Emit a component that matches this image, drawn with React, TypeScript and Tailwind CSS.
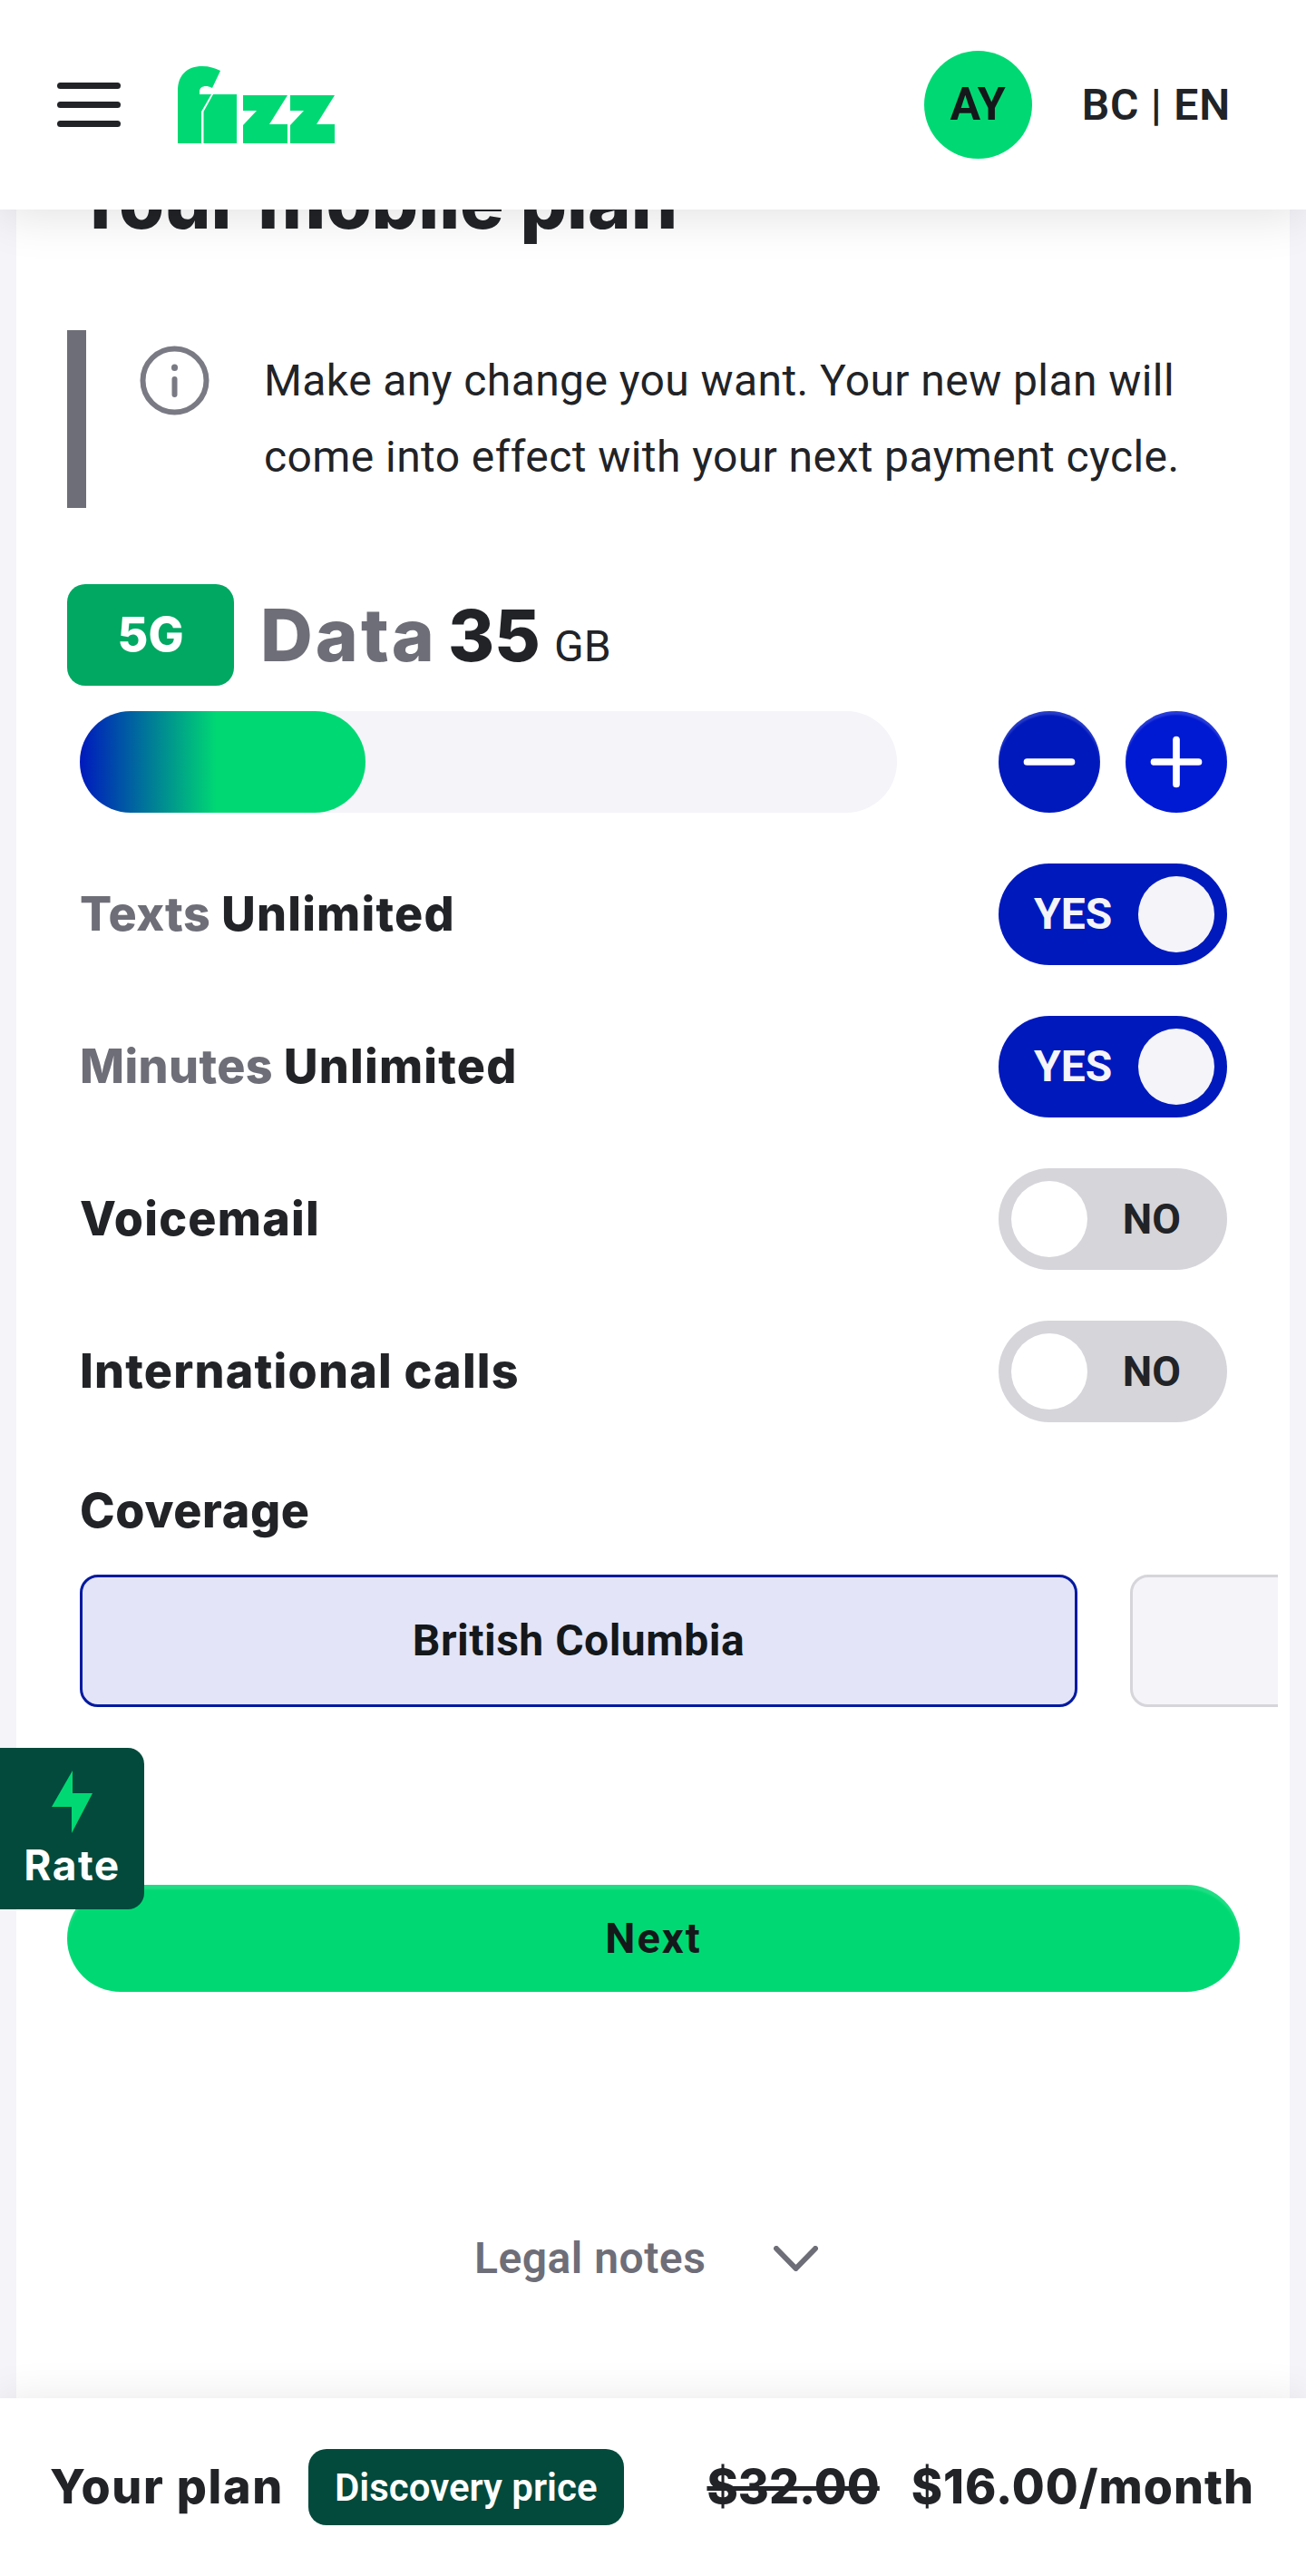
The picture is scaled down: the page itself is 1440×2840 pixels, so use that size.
import React from 'react';
import { Minus, Plus } from 'lucide-react';

const display = "font-['Inter','Liberation_Sans',sans-serif]";

function Toggle({ on }: { on: boolean }) {
    if (on) {
        return (
            <div className="w-[252px] h-[112px] rounded-full bg-[#0019bd] flex items-center justify-between pl-[39px] pr-[14px]">
                <span className="text-[48px] font-bold text-[#f4f4f9]">YES</span>
                <span className="w-[84px] h-[84px] rounded-full bg-[#f4f4f9]"></span>
            </div>
        );
    }
    return (
        <div className="w-[252px] h-[112px] rounded-full bg-[#d5d5da] flex items-center justify-between pl-[14px] pr-[51px]">
            <span className="w-[84px] h-[84px] rounded-full bg-white"></span>
            <span className="text-[46px] font-bold text-[#212327]">NO</span>
        </div>
    );
}

function Row({ gray, dark, on }: { gray?: string; dark: string; on: boolean }) {
    return (
        <div className="flex items-center justify-between h-[112px] mb-[56px]">
            <div className={`${display} text-[52px] font-extrabold tracking-[1.2px] text-[#212327]`}>
                {gray && <span className="text-[#6e6e78] tracking-[0.4px]">{gray} </span>}
                {dark}
            </div>
            <Toggle on={on} />
        </div>
    );
}

function FizzLogo() {
    return (
        <svg width="174" height="85" viewBox="0 0 174 85" fill="#00d973" className="ml-[63px]">
            <path d="M0 85V27C0 10 10 0 27 0C35 0 41 2 47 5L38 24C35 22.5 33 22 31 22C27 22 24 24 24 28V31H37L26 50V85Z" />
            <path d="M39 31H65V85H28.5V50Z" />
            <path d="M72 32H121L101 64H121V85H72V65L87 49H72Z" />
            <path d="M124 32H173L153 64H173V85H124V65L139 49H124Z" />
        </svg>
    );
}

export default function App() {
    return (
        <div className="relative w-[1440px] h-[2840px] flex flex-col bg-[#f4f4f9] overflow-hidden font-['Roboto',sans-serif] text-[#212327]">
            <header className="relative z-10 h-[231px] shrink-0 bg-white flex items-center pl-[63px] pr-[83px] shadow-[0_6px_50px_rgba(0,0,0,0.12)]">
                <div className="flex flex-col gap-[14px] w-[70px]">
                    <span className="h-[7px] rounded-full bg-[#212327]"></span>
                    <span className="h-[7px] rounded-full bg-[#212327]"></span>
                    <span className="h-[7px] rounded-full bg-[#212327]"></span>
                </div>
                <FizzLogo />
                <div className="ml-auto w-[119px] h-[119px] rounded-full bg-[#00d973] flex items-center justify-center text-[50px] font-bold text-[#14181a]">
                    AY
                </div>
                <div className="ml-[55px] text-[48px] font-semibold tracking-[0.8px]">BC | EN</div>
            </header>

            <main className="flex-1 min-h-0 mx-[18px] bg-white overflow-hidden">
                <h1 className={`${display} -mt-[50px] ml-[62px] text-[81px] leading-[84px] font-extrabold whitespace-nowrap`}>Your mobile plan</h1>

                <div className="mt-[99px] ml-[56px] h-[196px] flex border-l-[21px] border-[#6e6e78]">
                    <svg width="77" height="77" viewBox="0 0 77 77" fill="none" stroke="#7a7a84" strokeWidth="6" strokeLinecap="round" className="ml-[59px] mt-[17px] shrink-0">
                        <circle cx="38.5" cy="38.5" r="35" />
                        <path d="M38.5 37V54" />
                        <path d="M38.5 24V24.5" strokeWidth="7" />
                    </svg>
                    <p className="ml-[60px] mt-[14px] text-[48px] leading-[84px] tracking-[0.42px] whitespace-nowrap">
                        Make any change you want. Your new plan will<br />
                        come into effect with your next payment cycle.
                    </p>
                </div>

                <div className="mt-[84px] ml-[56px] h-[112px] flex items-center">
                    <div className={`${display} w-[184px] h-[112px] rounded-[20px] bg-[#00a862] flex items-center justify-center text-[52px] font-extrabold text-white`}>5G</div>
                    <div className="ml-[29px] flex items-baseline">
                        <span className={`${display} text-[80px] font-extrabold tracking-[3px] text-[#6e6e78]`}>Data</span>
                        <span className={`${display} ml-[12px] text-[78px] font-extrabold`}>35</span>
                        <span className="ml-[15px] text-[48px]">GB</span>
                    </div>
                </div>

                <div className="mt-[28px] ml-[70px] mr-[69px]">
                    <div className="flex items-center justify-between h-[112px] mb-[56px]">
                        <div className="w-[901px] h-[112px] rounded-full bg-[#f4f4f9]">
                            <div className="w-[315px] h-[112px] rounded-full bg-[linear-gradient(90deg,#0019bd_0%,#00d973_48%)]"></div>
                        </div>
                        <div className="flex gap-[28px]">
                            <button className="w-[112px] h-[112px] rounded-full bg-[#0019bd] flex items-center justify-center shadow-[inset_0_4px_2px_rgba(255,255,255,0.15)]">
                                <Minus size={84} color="white" strokeWidth={2.2} />
                            </button>
                            <button className="w-[112px] h-[112px] rounded-full bg-[#0019d2] flex items-center justify-center shadow-[inset_0_4px_2px_rgba(255,255,255,0.15)]">
                                <Plus size={84} color="white" strokeWidth={2.2} />
                            </button>
                        </div>
                    </div>
                    <Row gray="Texts" dark="Unlimited" on={true} />
                    <Row gray="Minutes" dark="Unlimited" on={true} />
                    <Row dark="Voicemail" on={false} />
                    <Row dark="International calls" on={false} />
                    <div className={`${display} pt-[10px] text-[52px] leading-[64px] font-extrabold tracking-[0.7px]`}>Coverage</div>
                </div>

                <div className="mt-[38px] ml-[70px] w-[1321px] flex gap-[58px] overflow-hidden">
                    <div className="w-[1100px] h-[146px] shrink-0 rounded-[20px] border-[3px] border-[#0019a0] bg-[#e3e4f8] flex items-center justify-center text-[48px] font-bold tracking-[0.5px] text-[#14181a]">
                        British Columbia
                    </div>
                    <div className="w-[400px] h-[146px] shrink-0 rounded-[20px] border-[3px] border-[#d5d5da] bg-[#f4f4f9]"></div>
                </div>

                <button className="mt-[196px] ml-[56px] w-[1293px] h-[118px] rounded-full bg-[#00d973] shadow-[inset_0_5px_2px_rgba(255,255,255,0.12)] text-[47px] font-bold tracking-[2px] text-[#14181a]">
                    Next
                </button>

                <div className="mt-[266px] ml-[505px] h-[56px] flex items-center text-[48px] font-semibold tracking-[0.5px] text-[#6e6e78]">
                    <span>Legal notes</span>
                    <svg width="49" height="28" viewBox="0 0 49 28" fill="none" stroke="#6e6e78" strokeWidth="6" strokeLinecap="round" strokeLinejoin="round" className="ml-[75px]">
                        <path d="M3 3L24.5 25L46 3" />
                    </svg>
                </div>
            </main>

            <footer className="relative z-10 h-[196px] shrink-0 bg-white flex items-center pl-[55px] pr-[57px] shadow-[0_-4px_40px_rgba(0,0,0,0.08)]">
                <span className={`${display} text-[52px] font-extrabold tracking-[1.7px]`}>Your plan</span>
                <span className="ml-[27px] h-[84px] px-[29px] rounded-[20px] bg-[#044a3c] flex items-center text-[42px] font-semibold text-white">Discovery price</span>
                <span className={`${display} ml-auto text-[52px] font-extrabold line-through`}>$32.00</span>
                <span className={`${display} ml-[35px] text-[52px] font-extrabold tracking-[1px]`}>$16.00/month</span>
            </footer>

            {/* Floating rate tab */}
            <div className="absolute z-20 left-0 top-[1927px] w-[159px] h-[178px] rounded-r-[18px] bg-[#044a3c] flex flex-col items-center">
                <svg width="45" height="69" viewBox="0 0 45 69" fill="#00d973" className="mt-[25px] shrink-0">
                    <path d="M23 0L0 40H22V69L45 25H23Z" />
                </svg>
                <span className={`${display} mt-[7px] text-[46px] leading-[56px] font-bold tracking-[1.5px] text-white`}>Rate</span>
            </div>
        </div>
    );
}
